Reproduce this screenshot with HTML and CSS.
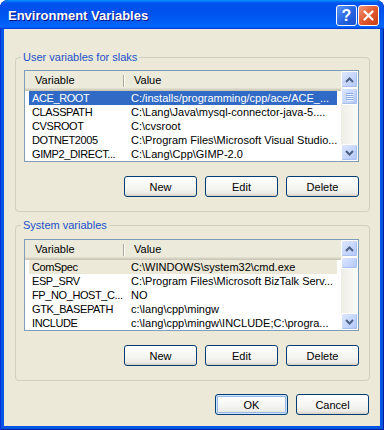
FILE: index.html
```html
<!DOCTYPE html>
<html lang="en">
<head>
    <meta charset="UTF-8">
    <title>Environment Variables</title>
    <link rel="stylesheet" href="styles.css">
</head>
<body>
    <div class="window">
        <div class="titlebar">
            <span class="title">Environment Variables</span>
            <div class="caption-buttons">
                <button class="cap cap-help">?</button>
                <button class="cap cap-close">
                    <svg width="11" height="11" viewBox="0 0 11 11"><path d="M1.5 1.5 L9.5 9.5 M9.5 1.5 L1.5 9.5" stroke="#fff" stroke-width="2.2" stroke-linecap="round"/></svg>
                </button>
            </div>
        </div>

        <div class="client">
            <fieldset class="group">
                <legend>User variables for slaks</legend>
                <div class="listview">
                    <div class="lv-body">
                        <div class="lv-header">
                            <div class="col col-name">Variable</div>
                            <div class="col col-value">Value</div>
                        </div>
                        <div class="lv-row selected"><span class="cell name">ACE_ROOT</span><span class="cell value">C:/installs/programming/cpp/ace/ACE_...</span></div>
                        <div class="lv-row"><span class="cell name">CLASSPATH</span><span class="cell value">C:\Lang\Java\mysql-connector-java-5....</span></div>
                        <div class="lv-row"><span class="cell name">CVSROOT</span><span class="cell value">C:\cvsroot</span></div>
                        <div class="lv-row"><span class="cell name">DOTNET2005</span><span class="cell value">C:\Program Files\Microsoft Visual Studio...</span></div>
                        <div class="lv-row"><span class="cell name">GIMP2_DIRECT...</span><span class="cell value">C:\Lang\Cpp\GIMP-2.0</span></div>
                    </div>
                    <div class="scrollbar">
                        <div class="sb-btn"><svg width="9" height="6" viewBox="0 0 9 6"><path d="M1 5 L4.5 1.5 L8 5" fill="none" stroke="#4D6185" stroke-width="2"/></svg></div>
                        <div class="sb-thumb"><svg width="7" height="8" viewBox="0 0 7 8"><path d="M0 0.5 H7 M0 2.5 H7 M0 4.5 H7 M0 6.5 H7" stroke="#8CABEC" stroke-width="1"/><path d="M1 1.5 H7 M1 3.5 H7 M1 5.5 H7 M1 7.5 H7" stroke="#EEF4FE" stroke-width="1"/></svg></div>
                        <div class="sb-track"></div>
                        <div class="sb-btn"><svg width="9" height="6" viewBox="0 0 9 6"><path d="M1 1 L4.5 4.5 L8 1" fill="none" stroke="#4D6185" stroke-width="2"/></svg></div>
                    </div>
                </div>
                <div class="button-row">
                    <button class="btn">New</button>
                    <button class="btn">Edit</button>
                    <button class="btn">Delete</button>
                </div>
            </fieldset>

            <fieldset class="group group-system">
                <legend>System variables</legend>
                <div class="listview">
                    <div class="lv-body">
                        <div class="lv-header">
                            <div class="col col-name">Variable</div>
                            <div class="col col-value">Value</div>
                        </div>
                        <div class="lv-row inactive"><span class="cell name">ComSpec</span><span class="cell value">C:\WINDOWS\system32\cmd.exe</span></div>
                        <div class="lv-row"><span class="cell name">ESP_SRV</span><span class="cell value">C:\Program Files\Microsoft BizTalk Serv...</span></div>
                        <div class="lv-row"><span class="cell name">FP_NO_HOST_C...</span><span class="cell value">NO</span></div>
                        <div class="lv-row"><span class="cell name">GTK_BASEPATH</span><span class="cell value">c:\lang\cpp\mingw</span></div>
                        <div class="lv-row"><span class="cell name">INCLUDE</span><span class="cell value">c:\lang\cpp\mingw\INCLUDE;C:\progra...</span></div>
                    </div>
                    <div class="scrollbar">
                        <div class="sb-btn"><svg width="9" height="6" viewBox="0 0 9 6"><path d="M1 5 L4.5 1.5 L8 5" fill="none" stroke="#4D6185" stroke-width="2"/></svg></div>
                        <div class="sb-thumb small"></div>
                        <div class="sb-track"></div>
                        <div class="sb-btn"><svg width="9" height="6" viewBox="0 0 9 6"><path d="M1 1 L4.5 4.5 L8 1" fill="none" stroke="#4D6185" stroke-width="2"/></svg></div>
                    </div>
                </div>
                <div class="button-row">
                    <button class="btn">New</button>
                    <button class="btn">Edit</button>
                    <button class="btn">Delete</button>
                </div>
            </fieldset>

            <div class="button-row dialog-buttons">
                <button class="btn btn-default">OK</button>
                <button class="btn">Cancel</button>
            </div>
        </div>
    </div>
</body>
</html>
```

FILE: styles.css
```css
* {
    box-sizing: border-box;
}

body {
    margin: 0;
    font-family: "Liberation Sans", Arial, sans-serif;
    font-size: 11px;
    background: #fff;
}

.window {
    width: 384px;
    height: 430px;
    display: flex;
    flex-direction: column;
    background: #0055E5;
    border-radius: 8px 8px 0 0;
    box-shadow: inset 1px 0 #0831D9, inset -1px 0 #001EA0, inset 0 -1px #001EA0;
    overflow: hidden;
}

/* title bar */
.titlebar {
    height: 29px;
    flex: none;
    display: flex;
    align-items: center;
    padding: 0 5px 0 8px;
    border-radius: 8px 8px 0 0;
    background: linear-gradient(to bottom, #0997FF 0%, #0053EE 10%, #0050EE 40%, #0062F8 85%, #0066FF 92%, #005BFF 95%, #003DD7 97%, #003DD7 100%);
}

.title {
    flex: 1;
    color: #fff;
    font-weight: bold;
    font-size: 13px;
    text-shadow: 1px 1px #0F1089;
    padding-top: 1px;
}

.caption-buttons {
    display: flex;
    gap: 1px;
    padding-top: 2px;
}

.cap {
    width: 21px;
    height: 21px;
    padding: 0;
    border: 1px solid #fff;
    border-radius: 3px;
    display: flex;
    align-items: center;
    justify-content: center;
    color: #fff;
}

.cap-help {
    background: linear-gradient(135deg, #5C94FA, #2663E0 55%, #1A4FCE);
    font-weight: bold;
    font-size: 16px;
    font-family: "Liberation Sans", Arial, sans-serif;
}

.cap-close {
    background: linear-gradient(135deg, #F0977A, #E1582F 50%, #C63F16);
}

/* client area */
.client {
    flex: 1;
    margin: 0 4px 4px;
    background: #ECE9D8;
    padding: 22px 10px 11px 11px;
    display: flex;
    flex-direction: column;
}

.group {
    margin: 0;
    min-width: 0;
    padding: 6px 10px 14px 8px;
    border: 1px solid #D0D0BF;
    border-radius: 4px;
}

.group-system {
    margin-top: 7px;
    padding-top: 7px;
}

.group legend {
    padding: 0 2px;
    margin-left: -3px;
    line-height: 13px;
    color: #2150C8;
}

/* list view */
.listview {
    display: flex;
    height: 92px;
    border: 1px solid #7F9DB9;
    background: #fff;
}

.lv-body {
    flex: 1;
    min-width: 0;
}

.lv-header {
    display: flex;
    height: 20px;
    background: #EBEADB;
    box-shadow: inset 0 -1px #CBC7B8, inset 0 -2px #D6D2C2, inset 0 -3px #E2DECD;
}

.lv-header .col {
    line-height: 19px;
}

.lv-header .col-name {
    width: 100px;
    padding-left: 10px;
    background:
        linear-gradient(#ACA899, #ACA899) right 1px top 4px / 1px 12px no-repeat,
        linear-gradient(#fff, #fff) right 0 top 4px / 1px 12px no-repeat;
}

.lv-header .col-value {
    padding-left: 9px;
}

.lv-row {
    display: flex;
    width: 308px;
    height: 14px;
    line-height: 14px;
    margin-left: 4px;
    color: #000;
}

.lv-row.selected {
    background: #316AC5;
    color: #fff;
}

.lv-row.inactive {
    background: #ECE9D8;
}

.cell {
    white-space: nowrap;
    overflow: hidden;
}

.cell.name {
    width: 95px;
    flex: none;
    padding-left: 3px;
    letter-spacing: -0.4px;
    overflow: visible;
}

.cell.value {
    flex: 1;
    padding-left: 7px;
}

/* scroll bar */
.scrollbar {
    width: 17px;
    flex: none;
    display: flex;
    flex-direction: column;
    background: linear-gradient(to right, #EEEDE5, #FCFCF9);
}

.sb-btn,
.sb-thumb {
    height: 17px;
    flex: none;
    display: flex;
    align-items: center;
    justify-content: center;
    border: 1px solid #fff;
    border-radius: 2px;
    background: linear-gradient(135deg, #DCE6FD, #C3D4FB 60%, #B1C6F5);
    box-shadow: inset -1px -1px #A9BFF0;
}

.sb-thumb.small {
    height: 12px;
}

.sb-track {
    flex: 1;
}

/* buttons */
.button-row {
    display: flex;
    justify-content: flex-end;
    gap: 8px;
    margin-top: 14px;
}

.dialog-buttons {
    margin-top: 13px;
    margin-right: 1px;
}

.btn {
    width: 73px;
    height: 21px;
    padding: 0;
    font-family: "Liberation Sans", Arial, sans-serif;
    font-size: 11px;
    color: #000;
    border: 1px solid #003C74;
    border-radius: 3px;
    background: linear-gradient(#FFFFFF, #F4F4F0 60%, #ECEBE6 85%, #D6D0C5);
}

.btn-default {
    box-shadow: inset 0 0 0 1px #CEE7FF, inset 0 0 0 2px #98B8EA;
}
```
